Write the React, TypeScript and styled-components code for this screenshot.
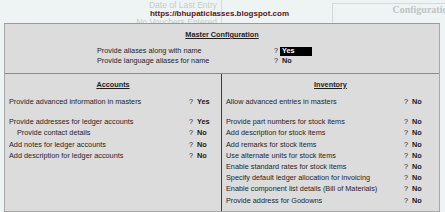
import styled, { createGlobalStyle } from "styled-components";

const GlobalStyle = createGlobalStyle`
  html, body {
    margin: 0;
    padding: 0;
    background: #eef4f4;
  }
  body {
    font-family: "Liberation Sans", Arial, sans-serif;
    width: 445px;
    height: 212px;
    overflow: hidden;
  }
`;

const Screen = styled.div`
  width: 445px;
  height: 212px;
  display: flex;
  flex-direction: column;
`;

const Backdrop = styled.div`
  position: relative;
  height: 23px;
  display: flex;
  flex-shrink: 0;
  overflow: hidden;
`;

const GhostInfo = styled.div`
  width: 217px;
  padding-right: 4px;
  border-right: 1px solid #d2dada;
  display: flex;
  flex-direction: column;
  align-items: flex-end;
  color: #c4cccc;
  font-size: 8.5px;
  line-height: 9px;
  padding-top: 1px;
  gap: 8px;
`;

const GhostBox = styled.div`
  margin-left: 110px;
  margin-top: 3px;
  flex: 1;
  border-left: 1px solid #d2dada;
  border-top: 1px solid #d2dada;
  display: flex;
  flex-direction: column;
  align-items: flex-end;
  overflow: hidden;
`;

const GhostCaption = styled.div`
  margin-top: -3px;
  color: #c8d0d0;
  font-size: 6px;
  line-height: 3px;
  padding-right: 22px;
  overflow: hidden;
  height: 3px;
`;

const GhostTitle = styled.div`
  font-family: "Liberation Serif", "Times New Roman", serif;
  font-weight: bold;
  color: #bcc4c4;
  font-size: 10px;
  line-height: 10px;
  margin-right: -8px;
  margin-top: 1px;
`;

const SiteUrl = styled.div`
  position: absolute;
  left: 0;
  right: 0;
  top: 9px;
  text-align: center;
  padding-right: 6px;
  font-size: 8px;
  line-height: 9px;
  font-weight: bold;
  color: #5a1414;
`;

const Panel = styled.div`
  margin: 0 5px 0 4px;
  height: 188px;
  background: #dcdcdc;
  border: 1px solid #a8a8a8;
  border-top: 1.5px solid #9a9a9a;
  display: flex;
  flex-direction: column;
  color: #262626;
  font-size: 7.3px;
`;

const TopSection = styled.div`
  height: 50px;
  border-bottom: 1.5px solid #8c8c8c;
  padding-top: 5px;
  box-sizing: border-box;
`;

const Heading = styled.div`
  text-align: center;
  font-weight: bold;
  text-decoration: underline;
  line-height: 11px;
  color: #1e1e1e;
`;

const AliasList = styled.div`
  margin-top: 6px;
  padding-left: 92px;
  display: flex;
  flex-direction: column;
`;

const AliasRow = styled.div`
  display: flex;
  line-height: 10px;
`;

const AliasLabel = styled.span`
  width: 177px;
`;

const Columns = styled.div`
  flex: 1;
  display: grid;
  grid-template-columns: 217px 1fr;
`;

const Column = styled.div<{ $divider?: boolean }>`
  padding-top: 4.5px;
  border-right: ${(p) => (p.$divider ? "1.5px solid #3c3c3c" : "none")};
`;

const RowList = styled.div<{ $inset: number }>`
  margin-top: 6.6px;
  padding-left: ${(p) => p.$inset}px;
  display: flex;
  flex-direction: column;
`;

const Row = styled.div<{ $indent?: boolean; $gapAfter?: boolean }>`
  display: flex;
  line-height: 11.2px;
  padding-left: ${(p) => (p.$indent ? 8 : 0)}px;
  margin-bottom: ${(p) => (p.$gapAfter ? 8.8 : 0)}px;
`;

const Label = styled.span`
  flex: 1;
`;

const Value = styled.span<{ $width: number }>`
  width: ${(p) => p.$width}px;
  white-space: nowrap;
`;

const Answer = styled.b<{ $active?: boolean }>`
  display: inline-block;
  margin-left: 2px;
  padding: 0 ${(p) => (p.$active ? 17 : 0)}px 0 2px;
  background: ${(p) => (p.$active ? "#000" : "transparent")};
  color: ${(p) => (p.$active ? "#fff" : "#1a1a1a")};
  line-height: ${(p) => (p.$active ? "8.5px" : "inherit")};
`;

type Item = { label: string; yes?: boolean; indent?: boolean; gapAfter?: boolean };

const accounts: Item[] = [
  { label: "Provide advanced information in masters", yes: true, gapAfter: true },
  { label: "Provide addresses for ledger accounts", yes: true },
  { label: "Provide contact details", indent: true },
  { label: "Add notes for ledger accounts" },
  { label: "Add description for ledger accounts" },
];

const inventory: Item[] = [
  { label: "Allow advanced entries in masters", gapAfter: true },
  { label: "Provide part numbers for stock items" },
  { label: "Add description for stock items" },
  { label: "Add remarks for stock items" },
  { label: "Use alternate units for stock items" },
  { label: "Enable standard rates for stock items" },
  { label: "Specify default ledger allocation for invoicing" },
  { label: "Enable component list details (Bill of Materials)" },
  { label: "Provide address for Godowns" },
];

function ConfigRows({ items, inset, valueWidth }: { items: Item[]; inset: number; valueWidth: number }) {
  return (
    <RowList $inset={inset}>
      {items.map((item) => (
        <Row key={item.label} $indent={item.indent} $gapAfter={item.gapAfter}>
          <Label>{item.label}</Label>
          <Value $width={valueWidth}>
            ?<Answer>{item.yes ? "Yes" : "No"}</Answer>
          </Value>
        </Row>
      ))}
    </RowList>
  );
}

export default function App() {
  return (
    <>
      <GlobalStyle />
      <Screen>
        <Backdrop>
          <GhostInfo>
            <span>Date of Last Entry</span>
            <span>No Vouchers Entered</span>
          </GhostInfo>
          <GhostBox>
            <GhostCaption>Currency of Tally</GhostCaption>
            <GhostTitle>Configuration</GhostTitle>
          </GhostBox>
          <SiteUrl>https://bhupaticlasses.blogspot.com</SiteUrl>
        </Backdrop>
        <Panel>
          <TopSection>
            <Heading>Master Configuration</Heading>
            <AliasList>
              <AliasRow>
                <AliasLabel>Provide aliases along with name</AliasLabel>
                <span>
                  ?<Answer $active>Yes</Answer>
                </span>
              </AliasRow>
              <AliasRow>
                <AliasLabel>Provide language aliases for name</AliasLabel>
                <span>
                  ?<Answer>No</Answer>
                </span>
              </AliasRow>
            </AliasList>
          </TopSection>
          <Columns>
            <Column $divider>
              <Heading>Accounts</Heading>
              <ConfigRows items={accounts} inset={4} valueWidth={32} />
            </Column>
            <Column>
              <Heading>Inventory</Heading>
              <ConfigRows items={inventory} inset={4} valueWidth={35} />
            </Column>
          </Columns>
        </Panel>
      </Screen>
    </>
  );
}
